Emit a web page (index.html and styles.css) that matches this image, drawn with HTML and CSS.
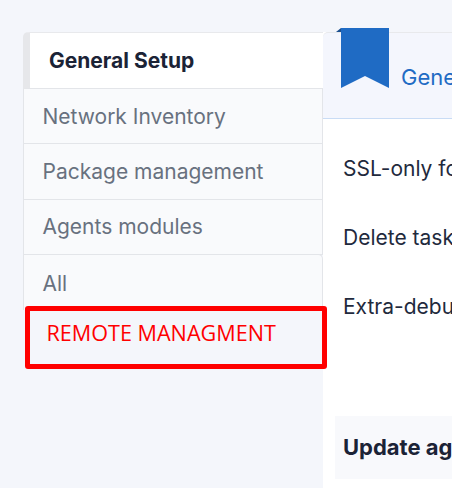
FILE: index.html
```html
<!DOCTYPE html>
<html lang="en">
<head>
    <meta charset="UTF-8">
    <meta name="viewport" content="width=device-width, initial-scale=1.0">
    <title>General Setup</title>
    <link rel="stylesheet" href="styles.css">
</head>
<body>
    <div class="layout">
        <div class="sidebar">
            <a class="tab active">General Setup</a>
            <a class="tab">Network Inventory</a>
            <a class="tab">Package management</a>
            <a class="tab">Agents modules</a>
            <a class="tab last">All</a>
        </div>

        <div class="main">
            <div class="main-head">
                <svg class="ribbon" viewBox="0 0 53 60" width="53" height="60">
                    <path d="M0 4 L5 0 L5 4 Z" fill="#1b4f8f"/>
                    <path d="M5 0 H53 V60 L29 48 L5 60 Z" fill="#1f6bc4"/>
                </svg>
                <span class="main-title">General Setup</span>
            </div>
            <div class="options">
                <div class="option">SSL-only for agents</div>
                <div class="option">Delete tasks after</div>
                <div class="option">Extra-debug</div>
            </div>
            <div class="section-head">Update agents</div>
        </div>
    </div>

    <!-- annotation drawn over the screenshot -->
    <div class="callout">REMOTE MANAGMENT</div>
</body>
</html>
```

FILE: styles.css
```css
/* General Styles */
html, body {
    height: 100%;
}

body {
    margin: 0;
    overflow: hidden;
    position: relative;
    background: #f4f6fb;
    font-family: Inter, "Liberation Sans", sans-serif;
    color: #1f2a3d;
}

.layout {
    display: flex;
    height: 100%;
    padding: 32px 0 0 23px;
    box-sizing: border-box;
}

/* Sidebar */
.sidebar {
    display: flex;
    flex-direction: column;
    flex: none;
    width: 300px;
}

.tab {
    display: flex;
    align-items: center;
    height: 54.3px;
    padding-left: 18.5px;
    font-size: 21px;
    color: #68717f;
    background: #f9fafc;
    border-left: 1px solid #e3e5e9;
    border-right: 1px solid #e3e5e9;
    border-bottom: 1px solid #e3e5e9;
    white-space: nowrap;
}

.tab.active {
    height: 55px;
    padding-left: 19px;
    font-weight: 700;
    color: #1b2336;
    background: #fff;
    border-top: 1px solid #e8e9ec;
    border-left: 7px solid #e6e7ea;
    border-right: 0;
    border-radius: 5px 0 0 0;
}

.tab.last {
    margin-top: -1px;
    padding-top: 1px;
    border-top: 1px solid #e3e5e9;
    border-radius: 0 5px 0 0;
    border-bottom: 0;
}

/* Main panel */
.main {
    flex: 1;
    min-width: 0;
    background: #fff;
}

.main-head {
    position: relative;
    display: flex;
    align-items: center;
    height: 85px;
    padding-left: 78px;
    background: #f4f6fd;
    border-top: 1px solid #e8e9ec;
    border-bottom: 1px solid #c9dcf5;
    border-radius: 5px 0 0 0;
}

.ribbon {
    position: absolute;
    left: 13px;
    top: -5px;
}

.main-title {
    margin-top: 3px;
    font-size: 22px;
    color: #1f6bc4;
    white-space: nowrap;
}

.options {
    display: flex;
    flex-direction: column;
    gap: 35px;
    padding: 33px 0 0 20px;
}

.option {
    font-size: 21px;
    line-height: 34px;
    white-space: nowrap;
}

.section-head {
    margin: 92px 0 0 12px;
    padding-left: 8px;
    height: 63px;
    line-height: 62px;
    font-size: 22px;
    font-weight: 700;
    color: #1b2336;
    background: #f8f9fc;
    white-space: nowrap;
}

/* Red annotation box */
.callout {
    position: absolute;
    left: 25px;
    top: 306px;
    width: 302px;
    height: 63px;
    padding: 10px 0 0 16.5px;
    box-sizing: border-box;
    border: 5px solid #f00;
    border-radius: 3px;
    background: #f4f6fb;
    font-family: "Open Sans", sans-serif;
    font-size: 21.6px;
    line-height: 24px;
    color: #f00;
    white-space: nowrap;
}
```
